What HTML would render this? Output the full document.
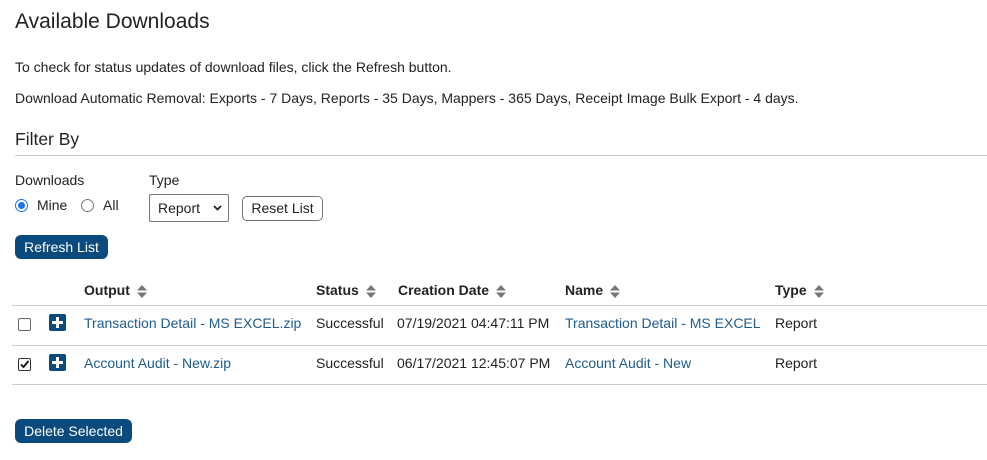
<!DOCTYPE html>
<html><head><style>
body{margin:0;width:987px;height:460px;background:#fff;font-family:"Liberation Sans",Arial,sans-serif;color:#222;position:relative;overflow:hidden}
.a{position:absolute;white-space:nowrap}
.btn{position:absolute;background:#0b4a7d;color:#fff;border-radius:6px;font-size:14px;line-height:24px;text-align:center}
.th{font-weight:bold;font-size:14px}
.sort{display:inline-block;vertical-align:middle;margin-left:7px}
.ln{position:absolute;left:12px;right:0;height:1px;background:#ccc}
.lk{color:#1f5b8c}
.td{font-size:14px}
.plus{position:absolute;width:17px;height:17px;background:#0b4a7d;border-radius:2px}
.plus:before{content:"";position:absolute;left:3px;top:7px;width:11px;height:3px;background:#fff}
.plus:after{content:"";position:absolute;left:7px;top:3px;width:3px;height:11px;background:#fff}
</style></head><body>
<div class="a" style="left:15px;top:10px;font-size:21px;color:#222">Available Downloads</div>
<div class="a" style="left:15px;top:59px;font-size:14px">To check for status updates of download files, click the Refresh button.</div>
<div class="a" style="left:15px;top:90px;font-size:14px">Download Automatic Removal: Exports - 7 Days, Reports - 35 Days, Mappers - 365 Days, Receipt Image Bulk Export - 4 days.</div>
<div class="a" style="left:15px;top:129px;font-size:17.5px">Filter By</div>
<div style="position:absolute;left:15px;right:0;top:155px;height:1px;background:#ccc"></div>
<div class="a" style="left:15px;top:172px;font-size:14px">Downloads</div>
<div class="a" style="left:149px;top:172px;font-size:14px">Type</div>
<div class="a" style="left:15px;top:199px;width:11px;height:11px;border:1px solid #1a73e8;border-radius:50%"><div style="margin:2px;width:7px;height:7px;border-radius:50%;background:#1a73e8"></div></div>
<div class="a" style="left:37px;top:197px;font-size:14px">Mine</div>
<div class="a" style="left:81px;top:199px;width:11px;height:11px;border:1px solid #777;border-radius:50%"></div>
<div class="a" style="left:103px;top:197px;font-size:14px">All</div>
<div class="a" style="left:149px;top:194px;width:78px;height:26px;border:1px solid #777;border-radius:2px;font-size:14px;line-height:26px"><span style="margin-left:8px">Report</span><svg style="position:absolute;right:6px;top:10px" width="9" height="6"><path d="M1 1L4.5 4.5L8 1" stroke="#222" stroke-width="1.8" fill="none"/></svg></div>
<div class="a" style="left:242px;top:196px;width:79px;height:23px;border:1px solid #777;border-radius:5px;background:#fff;font-size:14px;line-height:23px;text-align:center">Reset List</div>
<div class="btn" style="left:15px;top:235px;width:93px">Refresh List</div>
<svg width="0" height="0" style="position:absolute"><defs><g id="s"><path d="M0 5.5L5 0L10 5.5Z M0 7.5L5 13L10 7.5Z" fill="#777"/></g></defs></svg>
<div class="a th" style="left:84px;top:282px">Output<svg class="sort" width="10" height="13"><use href="#s"/></svg></div>
<div class="a th" style="left:316px;top:282px">Status<svg class="sort" width="10" height="13"><use href="#s"/></svg></div>
<div class="a th" style="left:398px;top:282px">Creation Date<svg class="sort" width="10" height="13"><use href="#s"/></svg></div>
<div class="a th" style="left:565px;top:282px">Name<svg class="sort" width="10" height="13"><use href="#s"/></svg></div>
<div class="a th" style="left:775px;top:282px">Type<svg class="sort" width="10" height="13"><use href="#s"/></svg></div>
<div class="ln" style="top:305px"></div>
<div class="a" style="left:18px;top:318px;width:11px;height:11px;border:1px solid #666;border-radius:2px"></div>
<div class="plus" style="left:49px;top:314px"></div>
<div class="a td lk" style="left:84px;top:315px">Transaction Detail - MS EXCEL.zip</div>
<div class="a td" style="left:316px;top:315px">Successful</div>
<div class="a td" style="left:397px;top:315px">07/19/2021 04:47:11 PM</div>
<div class="a td lk" style="left:565px;top:315px">Transaction Detail - MS EXCEL</div>
<div class="a td" style="left:775px;top:315px">Report</div>
<div class="ln" style="top:345px"></div>
<div class="a" style="left:18px;top:358px;width:11px;height:11px;border:1px solid #333;border-radius:2px"><svg width="11" height="11" style="position:absolute;left:0;top:0"><path d="M2 5.5L4.5 8L9.5 2" stroke="#111" stroke-width="1.8" fill="none"/></svg></div>
<div class="plus" style="left:49px;top:354px"></div>
<div class="a td lk" style="left:84px;top:355px">Account Audit - New.zip</div>
<div class="a td" style="left:316px;top:355px">Successful</div>
<div class="a td" style="left:397px;top:355px">06/17/2021 12:45:07 PM</div>
<div class="a td lk" style="left:565px;top:355px">Account Audit - New</div>
<div class="a td" style="left:775px;top:355px">Report</div>
<div class="ln" style="top:384px"></div>
<div class="btn" style="left:15px;top:419px;width:117px">Delete Selected</div>
</body></html>
